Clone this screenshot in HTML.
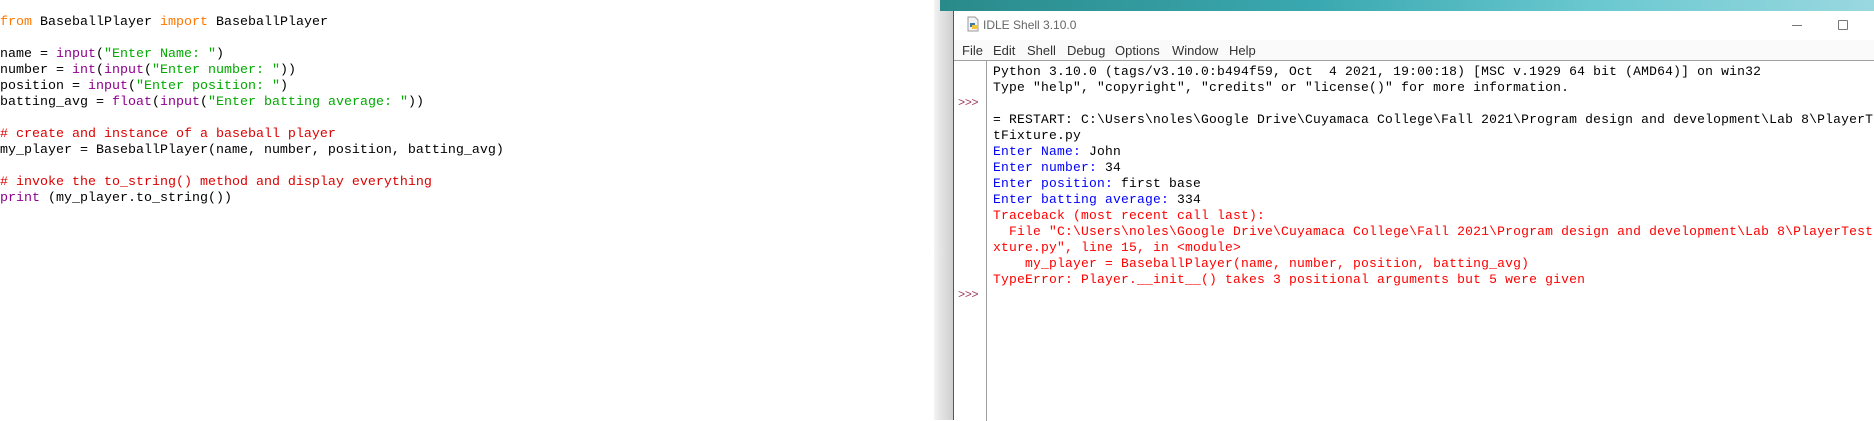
<!DOCTYPE html>
<html><head><style>
body{margin:0;width:1874px;height:420px;overflow:hidden;background:#fff;position:relative;font-family:"Liberation Mono",monospace}
.ed{position:absolute;left:0;top:15px;font-size:13.33px;line-height:16px;white-space:pre;color:#000}
.k{color:#ff7700}.b{color:#900090}.s{color:#00aa00}.c{color:#dd0000}
.shadow{position:absolute;left:934px;top:0;width:19px;height:420px;background:linear-gradient(90deg,#f4f4f4,#e6e6e6 30%,#cfcfcf)}
.wall{position:absolute;left:940px;top:0;width:934px;height:11px;background:linear-gradient(90deg,#2a8a8a,#3aa8b0 40%,#6ac8d0 70%,#9ad8e0)}
.win{position:absolute;left:953px;top:11px;width:921px;height:409px;background:#fff;border-left:1px solid #555}
.title{position:absolute;left:29px;top:7px;font-family:"Liberation Sans",sans-serif;font-size:12px;color:#666}
.menu{position:absolute;left:0;top:29px;height:20px;width:921px;background:#fafafa;font-family:"Liberation Sans",sans-serif;font-size:13px;color:#333;line-height:22px}
.menu span{position:absolute;top:0}
.area{position:absolute;left:0;top:49px;width:921px;height:360px;border-top:1px solid #a0a0a0}
.side{position:absolute;left:0;top:0;width:32px;height:360px;border-right:1px solid #a0a0a0;background:#fff}
.sh{position:absolute;left:39px;top:3px;font-size:13px;line-height:16px;white-space:pre;color:#000;letter-spacing:0.2px}
.p{position:absolute;left:4px;font-size:12px;color:#a04060;letter-spacing:-0.5px}
.bl{color:#0000ff}.r{color:#ff0000}
</style></head><body>
<div class="ed"><span class="k">from</span> BaseballPlayer <span class="k">import</span> BaseballPlayer

name = <span class="b">input</span>(<span class="s">"Enter Name: "</span>)
number = <span class="b">int</span>(<span class="b">input</span>(<span class="s">"Enter number: "</span>))
position = <span class="b">input</span>(<span class="s">"Enter position: "</span>)
batting_avg = <span class="b">float</span>(<span class="b">input</span>(<span class="s">"Enter batting average: "</span>))

<span class="c"># create and instance of a baseball player</span>
my_player = BaseballPlayer(name, number, position, batting_avg)

<span class="c"># invoke the to_string() method and display everything</span>
<span class="b">print</span> (my_player.to_string())</div>
<div class="shadow"></div>
<div class="wall"></div>
<div class="win">
 <svg style="position:absolute;left:12px;top:5px" width="14" height="16" viewBox="0 0 14 16"><path d="M2 1h7l3 3v11H2z" fill="#f4f4f4" stroke="#999"/><rect x="4" y="7" width="5" height="4" fill="#3b77a8"/><rect x="6" y="9" width="5" height="4" fill="#f2c53d"/></svg>
 <div class="title">IDLE Shell 3.10.0</div>
 <div style="position:absolute;left:838px;top:14px;width:10px;height:1px;background:#777"></div>
 <div style="position:absolute;left:884px;top:9px;width:8px;height:8px;border:1px solid #777;border-radius:1px"></div>
 <div class="menu"><span style="left:8px">File</span><span style="left:39px">Edit</span><span style="left:73px">Shell</span><span style="left:113px">Debug</span><span style="left:161px">Options</span><span style="left:218px">Window</span><span style="left:275px">Help</span></div>
 <div class="area">
  <div class="side"><div class="p" style="top:35px">&gt;&gt;&gt;</div><div class="p" style="top:227px">&gt;&gt;&gt;</div></div>
  <div class="sh">Python 3.10.0 (tags/v3.10.0:b494f59, Oct  4 2021, 19:00:18) [MSC v.1929 64 bit (AMD64)] on win32
Type "help", "copyright", "credits" or "license()" for more information.

= RESTART: C:\Users\noles\Google Drive\Cuyamaca College\Fall 2021\Program design and development\Lab 8\PlayerTe
tFixture.py
<span class="bl">Enter Name: </span>John
<span class="bl">Enter number: </span>34
<span class="bl">Enter position: </span>first base
<span class="bl">Enter batting average: </span>334
<span class="r">Traceback (most recent call last):
  File "C:\Users\noles\Google Drive\Cuyamaca College\Fall 2021\Program design and development\Lab 8\PlayerTestFi
xture.py", line 15, in &lt;module&gt;
    my_player = BaseballPlayer(name, number, position, batting_avg)
TypeError: Player.__init__() takes 3 positional arguments but 5 were given</span></div>
 </div>
</div>
</body></html>
